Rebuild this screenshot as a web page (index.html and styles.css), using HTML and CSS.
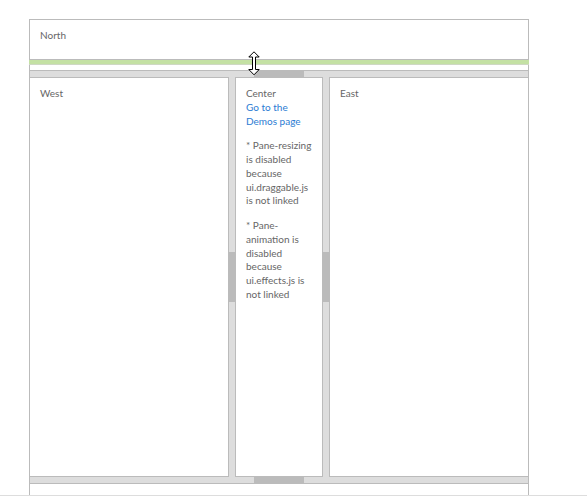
FILE: index.html
```
<!DOCTYPE html>
<html>
<head>
<meta charset="utf-8">
<title>Layout</title>
<link rel="stylesheet" href="styles.css">
</head>
<body>
<div class="viewport">
  <div class="layout">
    <div class="pane north">North</div>
    <div class="resizer-h"><div class="toggler-h"></div></div>
    <div class="middle">
      <div class="pane west">West</div>
      <div class="resizer-v"><div class="toggler-v"></div></div>
      <div class="pane center">
        <div>Center<br><a class="link" href="#">Go to the Demos page</a></div>
        <p class="note">* Pane-resizing is disabled because ui.draggable.js is not linked</p>
        <p class="note">* Pane-animation is disabled because ui.effects.js is not linked</p>
      </div>
      <div class="resizer-v"><div class="toggler-v"></div></div>
      <div class="pane east">East</div>
    </div>
    <div class="resizer-h"><div class="toggler-h"></div></div>
    <div class="pane south"></div>
    <div class="drag-ghost"></div>
    <svg class="cursor" width="12" height="25" viewBox="0 0 12 25">
      <path d="M6 0.8 L11.2 6 L7.5 6 L7.5 18.5 L11.2 18.5 L6 23.8 L0.8 18.5 L4.5 18.5 L4.5 6 L0.8 6 Z" fill="#fff" stroke="#000" stroke-width="1" stroke-linejoin="miter"/>
    </svg>
  </div>
</div>
</body>
</html>
```
FILE: styles.css
```
* { box-sizing: border-box; }
html, body { margin: 0; padding: 0; background: #fff; }
body {
  font-family: "Lato", "Open Sans", sans-serif;
  font-size: 10px;
  line-height: 13.75px;
  color: #666;
}
.viewport {
  width: 587px;
  height: 496px;
  overflow: hidden;
  border-bottom: 1px solid #ddd;
}
.layout {
  position: relative;
  width: 500px;
  margin: 19px 0 0 29px;
  display: grid;
  grid-template-rows: 52px 6px 400px 6px 40px;
}
.pane {
  background: #fff;
  border: 1px solid #bbb;
  padding: 9px 10px;
  overflow: hidden;
}
.middle {
  display: grid;
  grid-template-columns: 200px 6px 88px 6px 200px;
}
.resizer-h {
  background: #ddd;
  border-left: 1px solid #bbb;
  border-right: 1px solid #bbb;
  display: flex;
  justify-content: center;
}
.toggler-h { width: 50px; background: #bbb; }
.resizer-v {
  background: #ddd;
  display: flex;
  align-items: center;
}
.toggler-v { width: 6px; height: 50px; background: #bbb; }
.link { color: #2b7cd3; text-decoration: none; }
.note { margin: 11px 0 0; }
.drag-ghost {
  position: absolute;
  left: 0;
  top: 40px;
  width: 500px;
  height: 6px;
  background: #c4e1a4;
  border-top: 1px solid #bbb;
  border-bottom: 1px solid #cfd8c4;
}
.cursor {
  position: absolute;
  left: 219px;
  top: 32px;
}
```
